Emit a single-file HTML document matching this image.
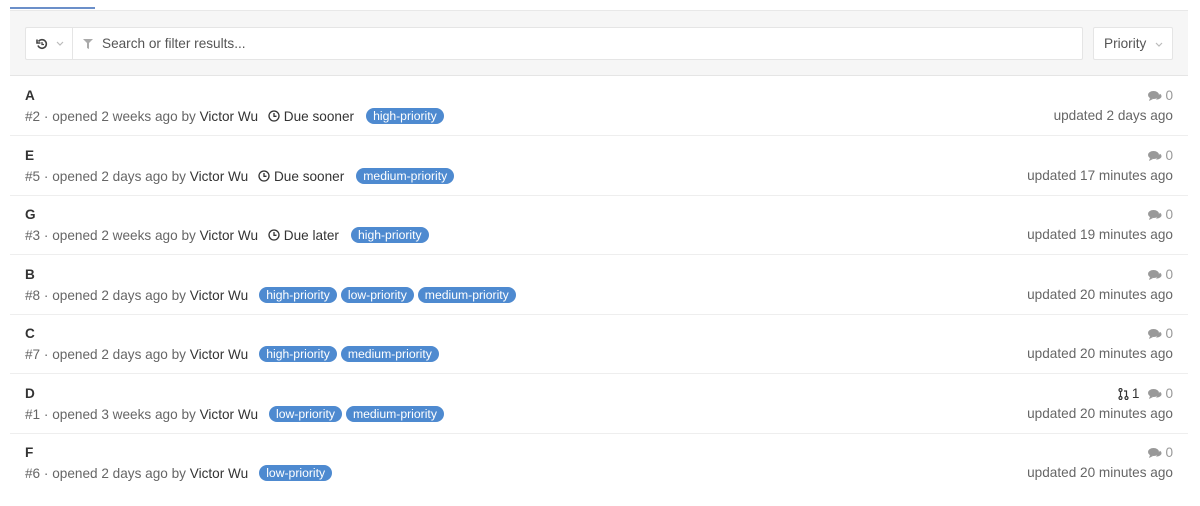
<!DOCTYPE html>
<html><head><style>
*{box-sizing:border-box;margin:0;padding:0}
body{width:1200px;height:506px;background:#fff;font-family:"Liberation Sans",sans-serif;font-size:13.6px;color:#555;position:relative;overflow:hidden}
.tab{position:absolute;left:10px;top:7px;width:85px;height:2px;background:#6b8fc9}
.bar{position:absolute;left:10px;top:10px;width:1178px;height:66px;background:#f6f6f6;border-top:1px solid #e8e8e8;border-bottom:1px solid #e5e5e5}
.search{position:absolute;left:15px;top:16px;width:1058px;height:33px;background:#fff;border:1px solid #e5e5e5;border-radius:2px}
.hist{position:absolute;left:0;top:0;width:47px;height:31px;border-right:1px solid #e5e5e5}
.ph{position:absolute;left:76px;top:8px;color:#555;font-size:13.6px}
.prio{position:absolute;left:1083px;top:16px;width:80px;height:33px;background:#fff;border:1px solid #e5e5e5;border-radius:2px;padding:8px 0 0 10px;color:#555}
.row{position:absolute;left:10px;width:1178px;height:60px;border-bottom:1px solid #eee}
.t{position:absolute;left:15px;top:12px;font-weight:bold;color:#333}
.m{position:absolute;left:15px;top:32px;color:#666;white-space:nowrap;display:flex;align-items:center}
.m b{font-weight:normal;color:#333}
.due{color:#333;margin-left:10px;display:inline-flex;align-items:center}
.lb{display:inline-block;background:#4e8ad0;color:#fff;font-size:12.2px;line-height:16px;padding:0 7px;border-radius:8px;margin-left:4px}
.lb:first-of-type{margin-left:11px}
.due+.lb{margin-left:12px}
.r1{position:absolute;right:15px;top:12px;color:#999;display:flex;align-items:center;gap:3px}
.r2{position:absolute;right:15px;top:32px;color:#666}
</style></head><body>
<div class="tab"></div>
<div class="bar">
 <div class="search">
  <div class="hist"><svg style="position:absolute;left:10px;top:10px" width="12" height="12" viewBox="0 0 12 12"><path d="M2.5 3.5A4.3 4.3 0 1 1 2 7.5" fill="none" stroke="#444" stroke-width="1.6"/><path d="M1 1.5v3.5h3.5" fill="none" stroke="#444" stroke-width="1.6"/><path d="M6 4v2.5h2" fill="none" stroke="#444" stroke-width="1.3"/></svg><svg style="position:absolute;left:30px;top:13px" width="8" height="6" viewBox="0 0 8 6"><path d="M1 1l3 3 3-3" fill="none" stroke="#bbb" stroke-width="1.2"/></svg></div>
  <svg style="position:absolute;left:57px;top:11px" width="10" height="10" viewBox="0 0 10 10"><path d="M0 0h10L6 4v6L4 9V4z" fill="#aaa"/></svg>
  <div class="ph">Search or filter results...</div>
 </div>
 <div class="prio">Priority <svg style="margin-left:5px" width="8" height="6" viewBox="0 0 8 6"><path d="M1 1l3 3 3-3" fill="none" stroke="#bbb" stroke-width="1.2"/></svg></div>
</div>
<svg width="0" height="0" style="position:absolute"><defs><symbol id="c" viewBox="0 0 14 12"><ellipse cx="5.5" cy="5" rx="5.5" ry="4" fill="#999"/><path d="M2 8l-1 3 4-2z" fill="#999"/><path d="M8 9.5c3 0 5.5-1.3 5.5-3.3 0-1-.6-1.8-1.6-2.4" fill="#999"/></symbol><symbol id="k" viewBox="0 0 12 12"><circle cx="6" cy="6" r="5" fill="none" stroke="#333" stroke-width="1.3"/><path d="M6 3v3.3H8.5" fill="none" stroke="#333" stroke-width="1.3"/></symbol></defs></svg>
<div class="row" style="top:76px"><div class="t">A</div><div class="m">#2 · opened 2 weeks ago by&nbsp;<b>Victor Wu</b><span class="due"><svg width="12" height="12"><use href="#k"/></svg>&nbsp;Due sooner</span><span class="lb">high-priority</span></div><div class="r1"><svg width="14" height="12"><use href="#c"/></svg>0</div><div class="r2">updated 2 days ago</div></div>
<div class="row" style="top:136px"><div class="t">E</div><div class="m">#5 · opened 2 days ago by&nbsp;<b>Victor Wu</b><span class="due"><svg width="12" height="12"><use href="#k"/></svg>&nbsp;Due sooner</span><span class="lb">medium-priority</span></div><div class="r1"><svg width="14" height="12"><use href="#c"/></svg>0</div><div class="r2">updated 17 minutes ago</div></div>
<div class="row" style="top:195px"><div class="t">G</div><div class="m">#3 · opened 2 weeks ago by&nbsp;<b>Victor Wu</b><span class="due"><svg width="12" height="12"><use href="#k"/></svg>&nbsp;Due later</span><span class="lb">high-priority</span></div><div class="r1"><svg width="14" height="12"><use href="#c"/></svg>0</div><div class="r2">updated 19 minutes ago</div></div>
<div class="row" style="top:255px"><div class="t">B</div><div class="m">#8 · opened 2 days ago by&nbsp;<b>Victor Wu</b><span class="lb">high-priority</span><span class="lb">low-priority</span><span class="lb">medium-priority</span></div><div class="r1"><svg width="14" height="12"><use href="#c"/></svg>0</div><div class="r2">updated 20 minutes ago</div></div>
<div class="row" style="top:314px"><div class="t">C</div><div class="m">#7 · opened 2 days ago by&nbsp;<b>Victor Wu</b><span class="lb">high-priority</span><span class="lb">medium-priority</span></div><div class="r1"><svg width="14" height="12"><use href="#c"/></svg>0</div><div class="r2">updated 20 minutes ago</div></div>
<div class="row" style="top:374px"><div class="t">D</div><div class="m">#1 · opened 3 weeks ago by&nbsp;<b>Victor Wu</b><span class="lb">low-priority</span><span class="lb">medium-priority</span></div><div class="r1"><svg width="11" height="12" viewBox="0 0 11 12"><circle cx="2.5" cy="2" r="1.5" fill="none" stroke="#333" stroke-width="1.2"/><circle cx="2.5" cy="10" r="1.5" fill="none" stroke="#333" stroke-width="1.2"/><circle cx="8.5" cy="10" r="1.5" fill="none" stroke="#333" stroke-width="1.2"/><path d="M2.5 3.5v5M8.5 8.5V3H6" fill="none" stroke="#333" stroke-width="1.2"/></svg><span style="color:#333;margin-right:6px">1</span><svg width="14" height="12"><use href="#c"/></svg>0</div><div class="r2">updated 20 minutes ago</div></div>
<div class="row" style="top:433px;border-bottom:none"><div class="t">F</div><div class="m">#6 · opened 2 days ago by&nbsp;<b>Victor Wu</b><span class="lb">low-priority</span></div><div class="r1"><svg width="14" height="12"><use href="#c"/></svg>0</div><div class="r2">updated 20 minutes ago</div></div>
</body></html>
